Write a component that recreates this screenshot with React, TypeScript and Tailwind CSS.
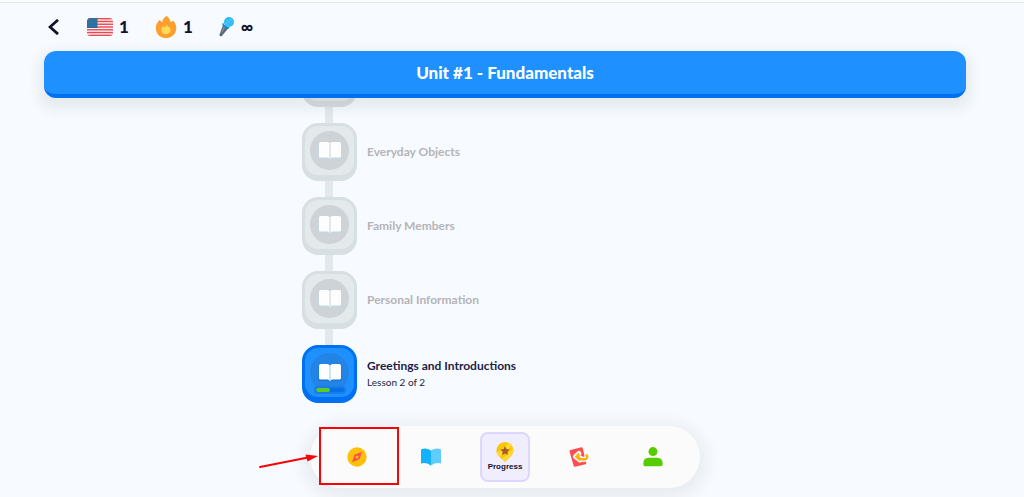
import React from "react";

type LessonState = "locked" | "active";

interface Lesson {
  title: string;
  state: LessonState;
  detail?: string;
}

const lessons: Lesson[] = [
  { title: "Everyday Objects", state: "locked" },
  { title: "Family Members", state: "locked" },
  { title: "Personal Information", state: "locked" },
  { title: "Greetings and Introductions", state: "active", detail: "Lesson 2 of 2" },
];

function FlagIcon() {
  return (
    <svg width="26" height="18" viewBox="0 0 26 18" aria-hidden="true">
      <clipPath id="flag-shape">
        <rect width="26" height="18" rx="3.5" />
      </clipPath>
      <g clipPath="url(#flag-shape)">
        <rect width="26" height="18" fill="#f4f4f6" />
        {[0, 1, 2, 3, 4, 5, 6].map((i) => (
          <rect key={i} y={i * 2.77} width="26" height="1.4" fill="#f0474f" />
        ))}
        <rect width="10.5" height="10" fill="#2f6f9f" />
        <g fill="#5c8fb8">
          {[1.5, 4, 6.5, 9].map((x) =>
            [2, 4.7, 7.4].map((y) => <circle key={`${x}-${y}`} cx={x} cy={y} r="0.4" />)
          )}
        </g>
      </g>
    </svg>
  );
}

function FlameIcon() {
  return (
    <svg width="22" height="22" viewBox="0 0 22 22" aria-hidden="true">
      <path d="M11.6 0C9.2 1.3 7.600 3.4 7.200 6.100C6.200 5.600 5.200 4.600 4.800 3.700C2.500 5.800.8 8.700.8 11.900C.8 17.600 5.200 22 11 22s10.300-4.400 10.300-10.100c0-3.200-1.600-5.700-3.200-7.400c-.7.8-1.600 1.300-2.500 1.400C15 3.300 13.700 1.200 11.600 0Z" fill="#fc9f2e" />
      <path d="M11 18.200c-2.700 0-4.600-1.800-4.600-4.200c0-1.600.9-2.900 2.100-3.700c.2.9.8 1.400 1.500 1.500c.3-1.300 1-2.300 2.200-2.900c.3 1 .9 1.600 1.700 2.100c1.100.8 1.700 1.800 1.700 3.100c0 2.400-1.900 4.100-4.600 4.100Z" fill="#fddc55" />
    </svg>
  );
}

function MicIcon() {
  return (
    <svg width="16" height="20" viewBox="0 0 16 20" aria-hidden="true">
      <path d="M4.300 7.200L9.700 10.700L2.800 19.100c-.7.7-2.500-.2-2.300-1.400Z" fill="#596775" />
      <path d="M5.200 8.600L7 9.800L2 17.200Z" fill="#8995a2" />
      <path d="M3.900 5.300C4.600 7.900 7.200 9.900 10.600 10.200L8.900 12.200C6.300 11.600 4 10 3.300 7.600Z" fill="#1687cc" />
      <circle cx="10" cy="5" r="5" fill="#2eb9f7" />
      <path d="M7 2.500l6 5M9.500.9l4.700 4.500M6 5l4.500 4.500M12.800 2L6.500 7.300" stroke="#66d1fb" strokeWidth=".6" />
    </svg>
  );
}

function LessonBook({ active = false }: { active?: boolean }) {
  return (
    <svg width="24" height="20" viewBox="0 0 24 20" aria-hidden="true">
      <path d="M.5 3.500V16.800Q.5 18 2 18H9.800Q11 18 12 19.500Q13 18 14.200 18H22Q23.500 18 23.500 16.800V3.500Z" fill={active ? "#1477dd" : "#c3d9e2"} />
      <path d="M1 3Q1 1 3 1H9Q11.400 1 12 2.800Q12.600 1 15 1H21Q23 1 23 3V15Q23 16.500 21.300 16.500H14.500Q12.600 16.500 12 18.400Q11.400 16.500 9.500 16.500H2.700Q1 16.500 1 15Z" fill="#fdfdfd" />
      <path d="M12 2.800V18" stroke={active ? "#a9d5f2" : "#d2dadd"} strokeWidth="1.200" />
    </svg>
  );
}

function CompassIcon() {
  return (
    <svg width="20" height="20" viewBox="0 0 20 20" aria-hidden="true">
      <circle cx="10" cy="10" r="9.700" fill="#ffc008" />
      <path d="M14.900 5.100l-2.100 6.500c-.2.600-.6 1-1.200 1.200l-6.500 2.100l2.100-6.500c.2-.6.600-1 1.200-1.200Z" fill="#fa5053" />
      <circle cx="10" cy="10" r="1.500" fill="#ffc008" />
    </svg>
  );
}

function BlueBookIcon() {
  return (
    <svg width="20" height="18" viewBox="0 0 20 18" aria-hidden="true">
      <path d="M0 1.500Q5-.8 10 2.500V17.500Q5 14 0 15.500Z" fill="#14b1fc" />
      <path d="M20 1.500Q15-.8 10 2.500V17.500Q15 14 20 15.500Z" fill="#61cdff" />
    </svg>
  );
}

function ProgressIcon() {
  return (
    <svg width="18" height="20" viewBox="0 0 18 20" aria-hidden="true">
      <clipPath id="pin-shape">
        <path d="M9 0A8.600 8.600 0 0 1 17.600 8.600C17.600 13 13 16.200 9 20C5 16.200.4 13 .4 8.600A8.600 8.600 0 0 1 9 0Z" />
      </clipPath>
      <g clipPath="url(#pin-shape)">
        <path d="M0 0H18V20H0Z" fill="#fdc500" />
        <path d="M0 12L14 0H18V2L2 16ZM5 18L18 6V11L8 20Z" fill="#ffda37" />
      </g>
      <path d="M9 4l1.450 2.900l3.250.5l-2.350 2.300l.55 3.200L9 11.400l-2.900 1.500l.55-3.200L4.300 7.400l3.250-.5Z" fill="#a75b2b" />
    </svg>
  );
}

function ReviewIcon() {
  return (
    <svg width="20" height="20" viewBox="0 0 20 20" aria-hidden="true">
      <path d="M1.500 3L12.500.2Q13.400 0 13.700.9L17.300 16Q17.500 17 16.600 17.300L6 19.800Q5 20 4.700 19L.5 4.400Q.2 3.400 1.500 3Z" fill="#fb5052" />
      <g fill="none" strokeLinecap="round" strokeLinejoin="round">
        <path d="M9.800 6.500L6.500 9.500L11 13L10.700 10.800Q14 13.300 16.800 11.800Q19 10.400 18 8" stroke="#fafafa" strokeWidth="5" />
        <path d="M10 11Q13.800 13.300 16.800 11.800Q19.200 10.300 17.600 8.300" stroke="#fcb317" strokeWidth="2.600" />
      </g>
      <path d="M9.800 6.500L6.500 9.700L10.800 13.500Z" fill="#fcb317" stroke="#fcb317" strokeWidth="1.200" strokeLinejoin="round" />
    </svg>
  );
}

function ProfileIcon() {
  return (
    <svg width="20" height="20" viewBox="0 0 20 20" aria-hidden="true" fill="#58cc02">
      <circle cx="10" cy="4.600" r="4.500" />
      <path d="M5.500 10.700h9q5.200 0 5.200 6q0 2.600-2.500 2.600H2.800Q.3 19.300.3 16.700q0-6 5.200-6Z" />
    </svg>
  );
}

function Tile({ active = false, label }: { active?: boolean; label: string }) {
  return (
    <button
      aria-label={label}
      className={
        active
          ? "flex h-[58px] w-[55px] shrink-0 rounded-2xl bg-[#0070f3] px-[3px] pt-[3px] pb-[6px]"
          : "flex h-[58px] w-[55px] shrink-0 rounded-2xl bg-[#d8dfe3] px-[3px] pt-[3px] pb-[6px]"
      }
    >
      <span
        className={
          active
            ? "relative flex h-full w-full items-center justify-center rounded-[13px] bg-[#1e90ff]"
            : "relative flex h-full w-full items-center justify-center rounded-[13px] bg-[#e4e9ec]"
        }
      >
        <span
          className={
            active
              ? "flex h-[39px] w-[39px] items-center justify-center rounded-full bg-[#2484e5]"
              : "flex h-[39px] w-[39px] items-center justify-center rounded-full bg-[#ced3d7]"
          }
        >
          <LessonBook active={active} />
        </span>
        {active && (
          <span className="absolute bottom-[3px] flex rounded-full bg-[#1a7de0] p-[2px]">
            <span className="flex h-1 w-7 overflow-hidden rounded-full bg-[#0070f3]">
              <span className="h-full w-1/2 rounded-full bg-[#5fc92a]" />
            </span>
          </span>
        )}
      </span>
    </button>
  );
}

function Connector() {
  return <div className="ml-[23px] h-4 w-2 bg-[#e3e8ec]" />;
}

function NavButton({ label, children }: { label: string; children: React.ReactNode }) {
  return (
    <button aria-label={label} className="flex h-[50px] w-[50px] items-center justify-center">
      {children}
    </button>
  );
}

export default function App() {
  return (
    <div className="min-h-screen overflow-hidden bg-[#f7fbff] pr-[58px] pl-11 font-['Lato',sans-serif] text-[#14112b]">
      <div className="-mr-[58px] -ml-11 h-[3px] border-b border-[#e4e6ea] bg-[#fafbfc]" />
      <header className="flex h-12 items-center">
        <button aria-label="Back" className="flex w-[43px] items-center pl-1">
          <svg width="11" height="16" viewBox="0 0 11 16" fill="none" aria-hidden="true">
            <path d="M9 1.800L2 8l7 6.200" stroke="currentColor" strokeWidth="2.800" strokeLinecap="square" />
          </svg>
        </button>
        <div className="flex items-center gap-[26px] text-[17px] leading-5 font-black">
          <div className="flex items-center gap-1.5">
            <FlagIcon />
            <span>1</span>
          </div>
          <div className="flex items-center gap-1.5">
            <FlameIcon />
            <span>1</span>
          </div>
          <div className="flex items-center gap-1.5">
            <MicIcon />
            <span>∞</span>
          </div>
        </div>
      </header>

      <h1 className="relative z-10 flex h-[47px] items-center justify-center rounded-xl border-b-4 border-[#0070f3] bg-[#1e90ff] text-[17px] font-black text-white shadow-[0_6px_12px_6px_rgba(30,40,50,0.07)]">
        Unit #1 - Fundamentals
      </h1>

      <main className="mx-auto -mt-10 w-[406px] max-w-full">
        <div className="flex h-[49px] items-end overflow-hidden">
          <Tile label="Previous lesson" />
        </div>
        <ul>
          {lessons.map((lesson) => {
            const active = lesson.state === "active";
            return (
              <li key={lesson.title}>
                <Connector />
                <div className="flex items-center gap-[10px]">
                  <Tile active={active} label={lesson.title} />
                  <div>
                    <h2
                      className={
                        active
                          ? "text-xs leading-4 font-bold text-[#221d46]"
                          : "text-xs leading-4 font-bold text-[#b4b4b6]"
                      }
                    >
                      {lesson.title}
                    </h2>
                    {lesson.detail && (
                      <p className="text-[10px] leading-4 text-[#221d46]">{lesson.detail}</p>
                    )}
                  </div>
                </div>
              </li>
            );
          })}
        </ul>
      </main>

      <nav className="relative mx-auto mt-[23px] flex w-[390px] max-w-full items-center justify-center gap-6 rounded-full bg-[#fbfbfc] py-1.5 shadow-[0_4px_14px_8px_rgba(30,40,50,0.06)]">
        <NavButton label="Explore"><CompassIcon /></NavButton>
        <NavButton label="Lessons"><BlueBookIcon /></NavButton>
        <button className="flex h-[50px] w-[50px] flex-col items-center justify-center rounded-lg border-2 border-[#dcd8fd] bg-[#f0edff]">
          <ProgressIcon />
          <span className="font-['Liberation_Sans',sans-serif] text-[8px] leading-[10px] font-bold">Progress</span>
        </button>
        <NavButton label="Review"><ReviewIcon /></NavButton>
        <NavButton label="Profile"><ProfileIcon /></NavButton>
        <div className="pointer-events-none absolute top-[1px] left-[9px] h-[58px] w-20 border-2 border-[#fb0207]" />
        <svg className="pointer-events-none absolute top-[27px] -left-[52px]" width="62" height="18" viewBox="0 0 62 18" aria-hidden="true">
          <path d="M2 14L50 4.500" stroke="#fb0207" strokeWidth="2" strokeLinecap="round" />
          <path d="M60 3L47.500 1.500L49.500 8.500Z" fill="#fb0207" />
        </svg>
      </nav>
    </div>
  );
}
